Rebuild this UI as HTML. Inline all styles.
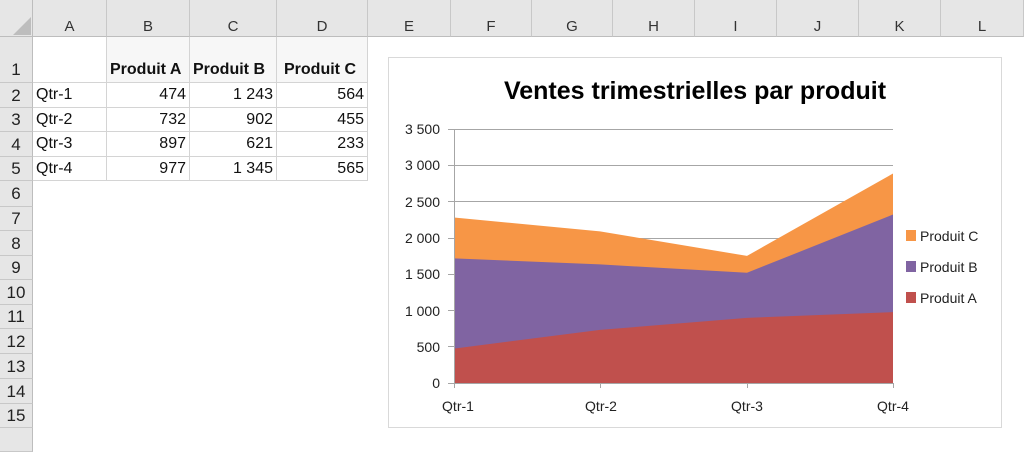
<!DOCTYPE html>
<html><head><meta charset="utf-8"><style>
*{margin:0;padding:0;box-sizing:border-box}
body{width:1024px;height:437px;overflow:hidden;background:#fff;font-family:"Liberation Sans",Arial,sans-serif;position:relative}
.a{position:absolute}
.ch{position:absolute;top:0;height:37px;background:#e6e6e6;border-right:1px solid #c8c8c8;border-bottom:1px solid #bdbdbd;font-size:15px;color:#333;text-align:center;line-height:54px}
.rh{position:absolute;left:0;width:33px;background:#e6e6e6;border-bottom:1px solid #c8c8c8;border-right:1px solid #bdbdbd;font-size:17px;color:#222;text-align:center}
.c{position:absolute;border-right:1px solid #d4d4d4;border-bottom:1px solid #d4d4d4;font-size:16px;color:#111;padding:0 3px;line-height:24px}
.r{text-align:right}
.b{font-weight:bold;background:#f7f7f7}
</style></head><body>
<div class="a" style="left:0;top:0;width:33px;height:37px;background:#e6e6e6;border-right:1px solid #bdbdbd;border-bottom:1px solid #bdbdbd"></div>
<svg class="a" style="left:12px;top:16px" width="20" height="20"><polygon points="19,1 19,19 1,19" fill="#bdbdbd"/></svg>
<div class="ch" style="left:33px;width:74px">A</div>
<div class="ch" style="left:107px;width:83px">B</div>
<div class="ch" style="left:190px;width:87px">C</div>
<div class="ch" style="left:277px;width:91px">D</div>
<div class="ch" style="left:368px;width:83px">E</div>
<div class="ch" style="left:451px;width:81px">F</div>
<div class="ch" style="left:532px;width:81px">G</div>
<div class="ch" style="left:613px;width:82px">H</div>
<div class="ch" style="left:695px;width:82px">I</div>
<div class="ch" style="left:777px;width:82px">J</div>
<div class="ch" style="left:859px;width:82px">K</div>
<div class="ch" style="left:941px;width:83px">L</div>

<div class="rh" style="top:37px;height:46px;line-height:66px">1</div>
<div class="rh" style="top:83px;height:25px;line-height:25px">2</div>
<div class="rh" style="top:108px;height:24px;line-height:24px">3</div>
<div class="rh" style="top:132px;height:25px;line-height:25px">4</div>
<div class="rh" style="top:157px;height:24px;line-height:24px">5</div>
<div class="rh" style="top:181px;height:26px;line-height:26px">6</div>
<div class="rh" style="top:207px;height:24px;line-height:24px">7</div>
<div class="rh" style="top:231px;height:25px;line-height:25px">8</div>
<div class="rh" style="top:256px;height:24px;line-height:24px">9</div>
<div class="rh" style="top:280px;height:25px;line-height:25px">10</div>
<div class="rh" style="top:305px;height:24px;line-height:24px">11</div>
<div class="rh" style="top:329px;height:25px;line-height:25px">12</div>
<div class="rh" style="top:354px;height:25px;line-height:25px">13</div>
<div class="rh" style="top:379px;height:25px;line-height:25px">14</div>
<div class="rh" style="top:404px;height:24px;line-height:24px">15</div>
<div class="rh" style="top:428px;height:24px"></div>

<div class="c" style="left:33px;top:37px;width:74px;height:46px"></div>
<div class="c b" style="left:107px;top:37px;width:83px;height:46px;line-height:66px">Produit A</div>
<div class="c b" style="left:190px;top:37px;width:87px;height:46px;line-height:66px">Produit B</div>
<div class="c b" style="left:277px;top:37px;width:91px;height:46px;line-height:66px;padding-left:7px">Produit C</div>

<div class="c" style="left:33px;top:83px;width:74px;height:25px">Qtr-1</div>
<div class="c r" style="left:107px;top:83px;width:83px;height:25px">474</div>
<div class="c r" style="left:190px;top:83px;width:87px;height:25px">1 243</div>
<div class="c r" style="left:277px;top:83px;width:91px;height:25px">564</div>
<div class="c" style="left:33px;top:108px;width:74px;height:24px">Qtr-2</div>
<div class="c r" style="left:107px;top:108px;width:83px;height:24px">732</div>
<div class="c r" style="left:190px;top:108px;width:87px;height:24px">902</div>
<div class="c r" style="left:277px;top:108px;width:91px;height:24px">455</div>
<div class="c" style="left:33px;top:132px;width:74px;height:25px">Qtr-3</div>
<div class="c r" style="left:107px;top:132px;width:83px;height:25px">897</div>
<div class="c r" style="left:190px;top:132px;width:87px;height:25px">621</div>
<div class="c r" style="left:277px;top:132px;width:91px;height:25px">233</div>
<div class="c" style="left:33px;top:157px;width:74px;height:24px">Qtr-4</div>
<div class="c r" style="left:107px;top:157px;width:83px;height:24px">977</div>
<div class="c r" style="left:190px;top:157px;width:87px;height:24px">1 345</div>
<div class="c r" style="left:277px;top:157px;width:91px;height:24px">565</div>

<svg class="a" style="left:0;top:0" width="1024" height="437" font-family="Liberation Sans, Arial, sans-serif">
<rect x="388.5" y="57.5" width="613" height="370" fill="#fff" stroke="#d9d9d9"/>
<text x="695" y="99" text-anchor="middle" font-size="25" font-weight="bold" fill="#000">Ventes trimestrielles par produit</text>
<g stroke="#a6a6a6" stroke-width="1">
<line x1="448" y1="129.5" x2="893" y2="129.5"/>
<line x1="448" y1="165.5" x2="893" y2="165.5"/>
<line x1="448" y1="201.5" x2="893" y2="201.5"/>
<line x1="448" y1="238.5" x2="893" y2="238.5"/>
<line x1="448" y1="274.5" x2="893" y2="274.5"/>
<line x1="448" y1="310.5" x2="893" y2="310.5"/>
<line x1="448" y1="346.5" x2="893" y2="346.5"/>
</g>
<polygon points="454,217.5 600,231.4 747,255.9 893,173.5 893,383 454,383" fill="#f79646"/>
<polygon points="454,258.4 600,264.4 747,272.8 893,214.5 893,383 454,383" fill="#8064a2"/>
<polygon points="454,348.6 600,329.9 747,317.9 893,312.1 893,383 454,383" fill="#c0504d"/>
<g stroke="#a6a6a6">
<line x1="454.5" y1="129" x2="454.5" y2="388"/>
<line x1="448" y1="383.5" x2="893" y2="383.5"/>
<line x1="600.5" y1="383" x2="600.5" y2="388"/>
<line x1="747.5" y1="383" x2="747.5" y2="388"/>
<line x1="893.5" y1="383" x2="893.5" y2="388"/>
</g>
<g font-size="14" fill="#222" text-anchor="end">
<text x="440" y="134">3 500</text><text x="440" y="170">3 000</text><text x="440" y="207">2 500</text><text x="440" y="243">2 000</text><text x="440" y="279">1 500</text><text x="440" y="316">1 000</text><text x="440" y="352">500</text><text x="440" y="388">0</text>
</g>
<g font-size="14" fill="#222" text-anchor="middle">
<text x="458" y="411">Qtr-1</text><text x="601" y="411">Qtr-2</text><text x="747" y="411">Qtr-3</text><text x="893" y="411">Qtr-4</text>
</g>
<rect x="906" y="230" width="10" height="11" fill="#f79646"/>
<rect x="906" y="261" width="10" height="11" fill="#8064a2"/>
<rect x="906" y="292" width="10" height="11" fill="#c0504d"/>
<g font-size="14" fill="#222"><text x="920" y="241">Produit C</text><text x="920" y="272">Produit B</text><text x="920" y="303">Produit A</text></g>
</svg>
</body></html>
